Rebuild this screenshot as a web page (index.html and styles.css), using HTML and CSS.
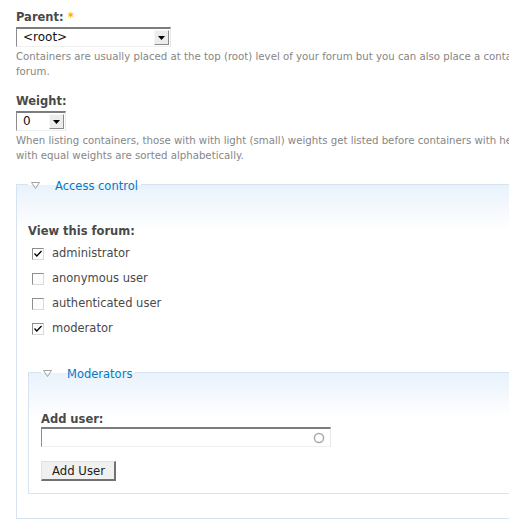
FILE: index.html
```html
<!DOCTYPE html>
<html>
<head>
<meta charset="utf-8">
<title>Forum container</title>
<link rel="stylesheet" href="styles.css">
</head>
<body>
<form class="page">
  <div class="form-item">
    <label class="field-label">Parent: <span class="required">*</span></label>
    <div class="select select-parent">
      <span class="select-value">&lt;root&gt;</span>
      <span class="select-arrow"><svg width="7" height="4" viewBox="0 0 7 4"><path d="M0 0H7L3.5 4Z" fill="#000"/></svg></span>
    </div>
    <div class="description">Containers are usually placed at the top (root) level of your forum but you can also place a container inside a parent container or forum.</div>
  </div>

  <div class="form-item weight-item">
    <label class="field-label">Weight:</label>
    <div class="select select-weight">
      <span class="select-value">0</span>
      <span class="select-arrow"><svg width="7" height="4" viewBox="0 0 7 4"><path d="M0 0H7L3.5 4Z" fill="#000"/></svg></span>
    </div>
    <div class="description">When listing containers, those with with light (small) weights get listed before containers with heavier (larger) weights. Containers with equal weights are sorted alphabetically.</div>
  </div>

  <fieldset class="fieldset outer">
    <legend class="legend"><svg class="toggle" width="9" height="7" viewBox="0 0 9 7"><path d="M0.5 0.5H8.5L4.5 6.5Z" fill="none" stroke="#a3a3a3" stroke-width="1"/></svg><span class="legend-text">Access control</span></legend>
    <div class="form-item checkbox-group">
      <div class="field-label label-tight">View this forum:</div>
      <div class="checkbox-row"><span class="checkbox"><svg width="10" height="10" viewBox="0 0 10 10"><path d="M1.5 4.5L3.8 7L8.5 2" fill="none" stroke="#000" stroke-width="1.3"/></svg></span>administrator</div>
      <div class="checkbox-row"><span class="checkbox"></span>anonymous user</div>
      <div class="checkbox-row"><span class="checkbox"></span>authenticated user</div>
      <div class="checkbox-row"><span class="checkbox"><svg width="10" height="10" viewBox="0 0 10 10"><path d="M1.5 4.5L3.8 7L8.5 2" fill="none" stroke="#000" stroke-width="1.3"/></svg></span>moderator</div>
    </div>

    <fieldset class="fieldset inner">
      <legend class="legend"><svg class="toggle" width="9" height="7" viewBox="0 0 9 7"><path d="M0.5 0.5H8.5L4.5 6.5Z" fill="none" stroke="#a3a3a3" stroke-width="1"/></svg><span class="legend-text">Moderators</span></legend>
      <div class="form-item user-item">
        <label class="field-label label-input">Add user:</label>
        <div class="textfield">
          <input class="textfield-input" type="text">
          <svg class="throbber" width="12" height="12" viewBox="0 0 12 12"><circle cx="6" cy="6" r="4.6" fill="none" stroke="#a9a9a9" stroke-width="1.5"/></svg>
        </div>
      </div>
      <button class="button" type="button">Add User</button>
    </fieldset>
  </fieldset>
</form>
</body>
</html>
```

FILE: styles.css
```css
html {
  overflow: hidden;
}

body {
  margin: 0;
  background: #fff;
  color: #494949;
  font-family: "DejaVu Sans", Verdana, sans-serif;
  font-size: 11.5px;
  line-height: 15px;
}

.page {
  width: 681px;
  padding: 10px 0 0 16px;
}

.form-item {
  margin-bottom: 15px;
}

.weight-item {
  margin-bottom: 12px;
}

.field-label {
  display: block;
  font-weight: bold;
  margin-bottom: 2px;
}

.label-tight {
  margin-bottom: 2px;
}

.label-input {
  margin-bottom: 0;
}

.required {
  color: #ffae00;
}

.description {
  padding-top: 2px;
  font-size: 10.2px;
  line-height: 15px;
  color: #868686;
}

.select {
  display: flex;
  align-items: center;
  box-sizing: border-box;
  height: 20px;
  padding: 0 1px 0 6px;
  background: #fff;
  border-top: 2px solid #7d7d7d;
  border-left: 1px solid #8c8c8c;
  border-right: 1px solid #e6e6e6;
  border-bottom: 1px solid #f0f0f0;
}

.select-parent {
  width: 155px;
}

.select-weight {
  width: 50px;
}

.select-value {
  flex: 1;
  font-size: 12px;
  color: #111;
}

.select-arrow {
  display: flex;
  align-items: center;
  justify-content: center;
  box-sizing: border-box;
  width: 15px;
  height: 15px;
  background: #ececec;
  border-top: 1px solid #f8f8f8;
  border-left: 1px solid #f8f8f8;
  border-right: 1px solid #8a8a8a;
  border-bottom: 1px solid #8a8a8a;
}

.fieldset {
  min-width: 0;
  margin: 0;
  border: 1px solid #d6e4f1;
  background: linear-gradient(#e9f2fb, #ffffff 46px);
}

.outer {
  padding: 30px 11px 24px 11px;
}

.inner {
  padding: 30px 11px 12px 12px;
}

.legend {
  padding: 4px 3px 0 3px;
  line-height: 15px;
  color: #027ac6;
}

.inner .legend {
  padding-left: 2px;
}

.toggle {
  vertical-align: 1px;
  margin-right: 15px;
}

.checkbox-group {
  margin-bottom: 22px;
}

.checkbox-row {
  display: flex;
  align-items: center;
  height: 25px;
}

.checkbox {
  display: flex;
  align-items: flex-start;
  justify-content: flex-start;
  box-sizing: border-box;
  width: 12px;
  height: 12px;
  margin: 0 8px 0 4px;
  background: #fdfdfd;
  border-top: 1px solid #8e8e8e;
  border-left: 1px solid #8e8e8e;
  border-right: 1px solid #dadada;
  border-bottom: 1px solid #dadada;
}

.user-item {
  margin-bottom: 14px;
}

.textfield {
  display: flex;
  align-items: center;
  box-sizing: border-box;
  width: 290px;
  height: 20px;
  padding-right: 5px;
  background: #fff;
  border-top: 2px solid #7d7d7d;
  border-left: 1px solid #8c8c8c;
  border-right: 1px solid #e6e6e6;
  border-bottom: 1px solid #f0f0f0;
}

.textfield-input {
  flex: 1;
  min-width: 0;
  height: 16px;
  padding: 0;
  border: 0;
  background: transparent;
  outline: none;
}

.button {
  display: block;
  box-sizing: border-box;
  height: 20px;
  padding: 0 9px 0 10px;
  font-family: "DejaVu Sans", Verdana, sans-serif;
  font-size: 11.7px;
  line-height: 16px;
  color: #222;
  background: #f0f0f0;
  border-top: 1px solid #e2e2e2;
  border-left: 1px solid #e2e2e2;
  border-right: 2px solid #727272;
  border-bottom: 2px solid #727272;
}
```
